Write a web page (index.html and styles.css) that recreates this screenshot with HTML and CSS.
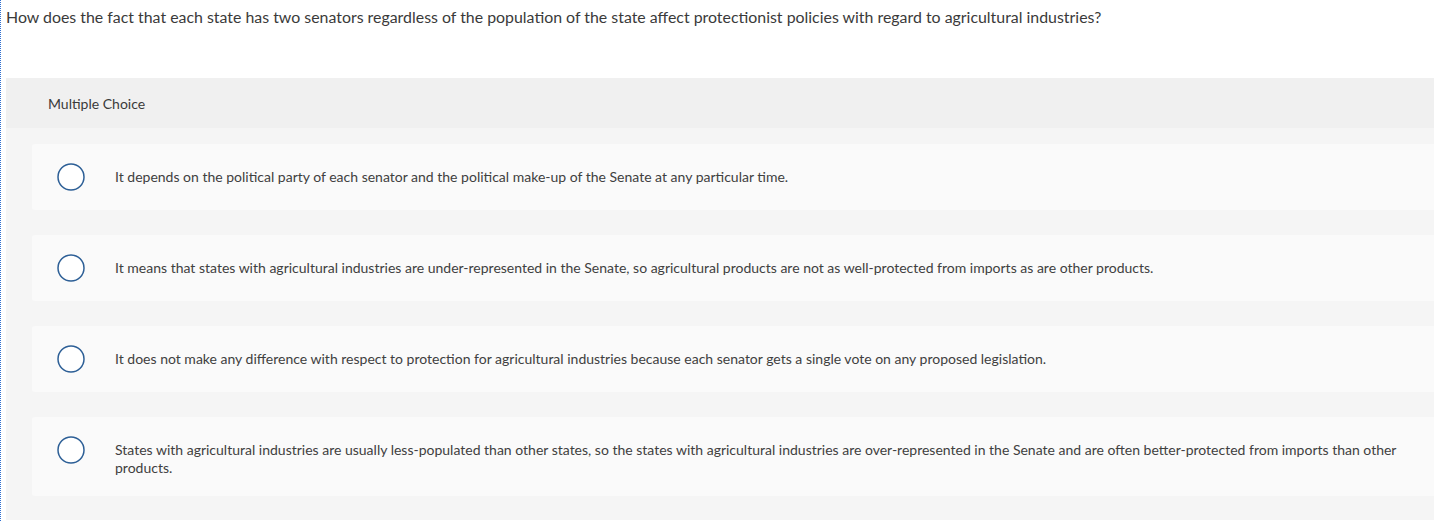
FILE: index.html
```html
<!DOCTYPE html>
<html lang="en">
<head>
<meta charset="utf-8">
<title>Multiple Choice Question</title>
<link rel="stylesheet" href="styles.css">
</head>
<body>
<div class="frame">
  <p class="question">How does the fact that each state has two senators regardless of the population of the state affect protectionist policies with regard to agricultural industries?</p>
  <section class="panel">
    <header class="panel-head">Multiple Choice</header>
    <div class="panel-body">
      <label class="option">
        <svg class="radio" width="28" height="28" viewBox="0 0 28 28"><circle cx="14" cy="14" r="13" fill="#fff" stroke="#2d5f96" stroke-width="1.5"/></svg>
        <span class="option-text">It depends on the political party of each senator and the political make-up of the Senate at any particular time.</span>
      </label>
      <label class="option">
        <svg class="radio" width="28" height="28" viewBox="0 0 28 28"><circle cx="14" cy="14" r="13" fill="#fff" stroke="#2d5f96" stroke-width="1.5"/></svg>
        <span class="option-text">It means that states with agricultural industries are under-represented in the Senate, so agricultural products are not as well-protected from imports as are other products.</span>
      </label>
      <label class="option">
        <svg class="radio" width="28" height="28" viewBox="0 0 28 28"><circle cx="14" cy="14" r="13" fill="#fff" stroke="#2d5f96" stroke-width="1.5"/></svg>
        <span class="option-text">It does not make any difference with respect to protection for agricultural industries because each senator gets a single vote on any proposed legislation.</span>
      </label>
      <label class="option">
        <svg class="radio" width="28" height="28" viewBox="0 0 28 28"><circle cx="14" cy="14" r="13" fill="#fff" stroke="#2d5f96" stroke-width="1.5"/></svg>
        <span class="option-text">States with agricultural industries are usually less-populated than other states, so the states with agricultural industries are over-represented in the Senate and are often better-protected from imports than other products.</span>
      </label>
    </div>
  </section>
</div>
</body>
</html>
```

FILE: styles.css
```css
html, body {
  margin: 0;
  padding: 0;
  background: #ffffff;
}

body {
  font-family: "Lato", "Liberation Sans", sans-serif;
  color: #333333;
}

.frame {
  border-left: 1px dotted #2f6fd0;
  padding-left: 5px;
  min-height: 521px;
  box-sizing: border-box;
}

.question {
  margin: 0;
  padding-top: 7px;
  font-size: 15.9px;
  line-height: 20px;
  color: #3a3a3a;
  height: 71px;
}

.panel {
  background: #f5f5f5;
  padding-bottom: 24px;
}

.panel-head {
  background: #f0f0f0;
  height: 50px;
  display: flex;
  align-items: center;
  padding-left: 42px;
  font-size: 14px;
  color: #3a3a3a;
}

.panel-body {
  padding: 16px 0 0 26px;
  display: flex;
  flex-direction: column;
  gap: 25px;
}

.option {
  display: flex;
  align-items: flex-start;
  background: #fafafa;
  padding: 19px 28px 19px 25px;
  border-radius: 3px 0 0 3px;
}

.radio {
  flex: none;
  display: block;
}

.option-text {
  padding-top: 5px;
  margin-left: 30px;
  font-size: 14px;
  line-height: 18px;
  color: #404040;
}
```
